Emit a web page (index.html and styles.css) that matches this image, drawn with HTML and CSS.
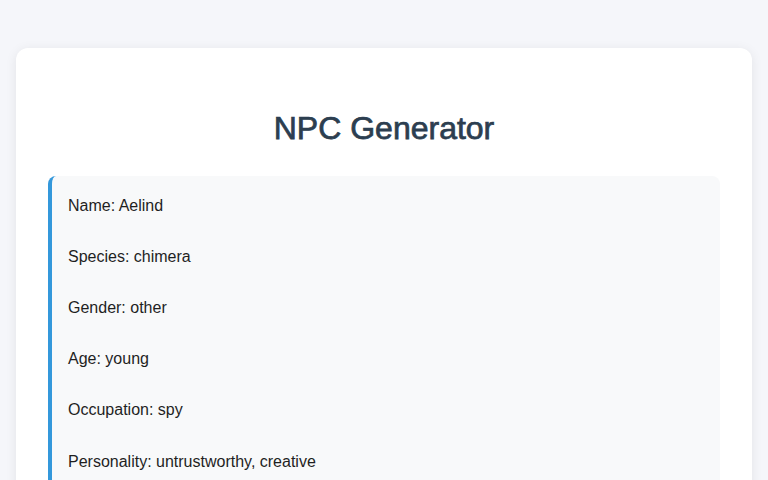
FILE: index.html
```html
<!DOCTYPE html>
<html>
<head>
<meta charset="utf-8">
<link rel="stylesheet" href="styles.css">
</head>
<body>
<div class="card">
  <h1 class="title">NPC Generator</h1>
  <div class="npc">
    <p class="row">Name: Aelind</p>
    <p class="row">Species: chimera</p>
    <p class="row">Gender: other</p>
    <p class="row">Age: young</p>
    <p class="row">Occupation: spy</p>
    <p class="row">Personality: untrustworthy, creative</p>
  </div>
</div>
</body>
</html>
```
FILE: styles.css
```css
html, body {
  margin: 0;
}
body {
  background: #f5f6fa;
  padding: 48px 16px 16px;
  font-family: "Liberation Sans", Arial, sans-serif;
  color: #1f1f1f;
}
.card {
  background: #ffffff;
  border-radius: 12px;
  box-shadow: 0 2px 12px rgba(0, 0, 0, 0.08);
  padding: 32px;
}
.title {
  margin: 30px 0 29px;
  text-align: center;
  font-size: 32px;
  font-weight: normal;
  line-height: 37px;
  color: #2c3e50;
  -webkit-text-stroke: 0.75px #2c3e50;
}
.npc {
  background: #f8f9fa;
  border-left: 4px solid #3498db;
  border-radius: 8px;
  padding: 19.5px 16px;
  display: flex;
  flex-direction: column;
  gap: 32px;
}
.row {
  margin: 0;
  font-size: 16px;
  line-height: 19.2px;
}
```
